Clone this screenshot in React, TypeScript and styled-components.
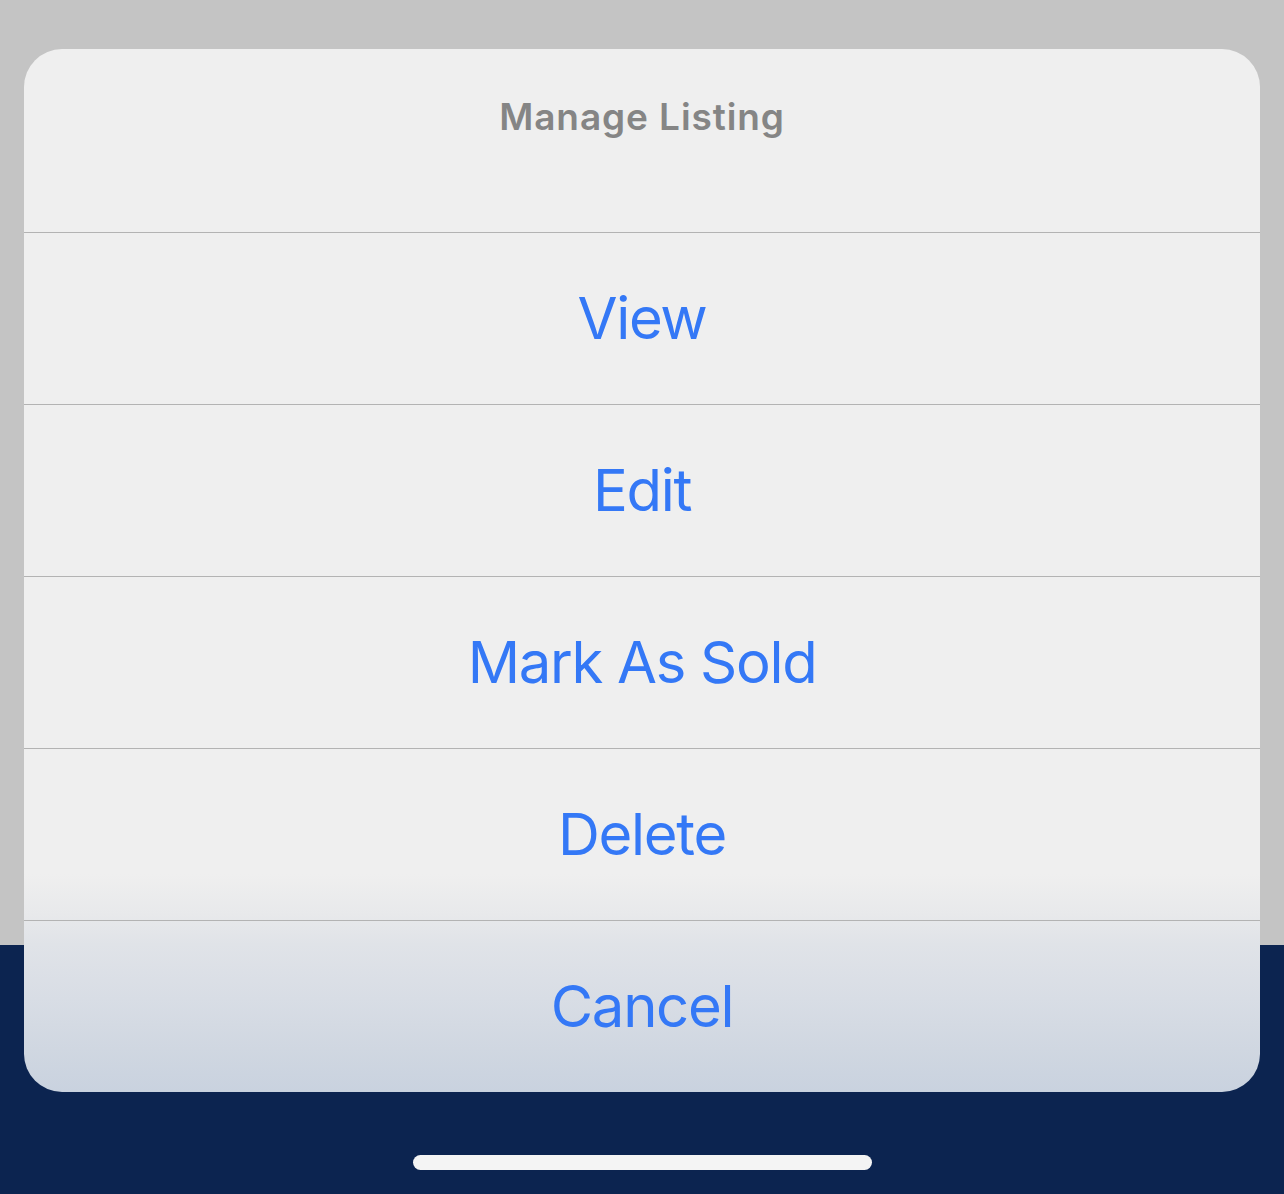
import React from "react";
import styled, { createGlobalStyle } from "styled-components";

const GlobalStyle = createGlobalStyle`
  html, body {
    margin: 0;
    padding: 0;
  }
  body {
    font-family: Inter, "Noto Sans", "Liberation Sans", sans-serif;
    -webkit-font-smoothing: antialiased;
  }
`;

// the screen behind the sheet: dimmed content above, navy tab bar below
const Screen = styled.div`
  width: 1284px;
  height: 1194px;
  box-sizing: border-box;
  padding: 49px 24px 0;
  display: flex;
  flex-direction: column;
  align-items: center;
  background: linear-gradient(
    to bottom,
    #c4c4c4 0,
    #c4c4c4 945px,
    #0c2450 945px,
    #0c2450 100%
  );
  overflow: hidden;
`;

const Sheet = styled.div`
  width: 100%;
  border-radius: 38px;
  overflow: hidden;
  display: flex;
  flex-direction: column;
  background: linear-gradient(
    to bottom,
    #efefef 0,
    #efefef 825px,
    #e8e9eb 865px,
    #e0e3e8 895px,
    #d8dde5 950px,
    #d0d7e1 1000px,
    #c9d2df 100%
  );
`;

const Header = styled.div`
  height: 184px;
  box-sizing: border-box;
  padding-top: 46px;
  display: flex;
  justify-content: center;
  align-items: flex-start;
  border-bottom: 1px solid #b3b3b3;
`;

const Title = styled.div`
  font-size: 37px;
  font-weight: 600;
  color: #858585;
  line-height: 44px;
  letter-spacing: 0.9px;
`;

const Action = styled.button<{ $last?: boolean }>`
  all: unset;
  height: ${(p) => (p.$last ? 171 : 172)}px;
  box-sizing: border-box;
  display: flex;
  justify-content: center;
  align-items: center;
  font-family: Inter, "Noto Sans", "Liberation Sans", sans-serif;
  font-size: 58px;
  font-weight: 400;
  color: #3478f6;
  letter-spacing: -1.3px;
  padding-bottom: ${(p) => (p.$last ? 2 : 1)}px;
  border-bottom: ${(p) => (p.$last ? "none" : "1px solid #b3b3b3")};
  cursor: pointer;
`;

const HomeIndicator = styled.div`
  margin-top: 63px;
  width: 459px;
  height: 15px;
  border-radius: 8px;
  background: #f4f4f4;
`;

const actions = ["View", "Edit", "Mark As Sold", "Delete", "Cancel"];

export default function App() {
  return (
    <>
      <GlobalStyle />
      <Screen>
        <Sheet>
          <Header>
            <Title>Manage Listing</Title>
          </Header>
          {actions.map((label, i) => (
            <Action key={label} $last={i === actions.length - 1}>
              {label}
            </Action>
          ))}
        </Sheet>
        <HomeIndicator />
      </Screen>
    </>
  );
}
